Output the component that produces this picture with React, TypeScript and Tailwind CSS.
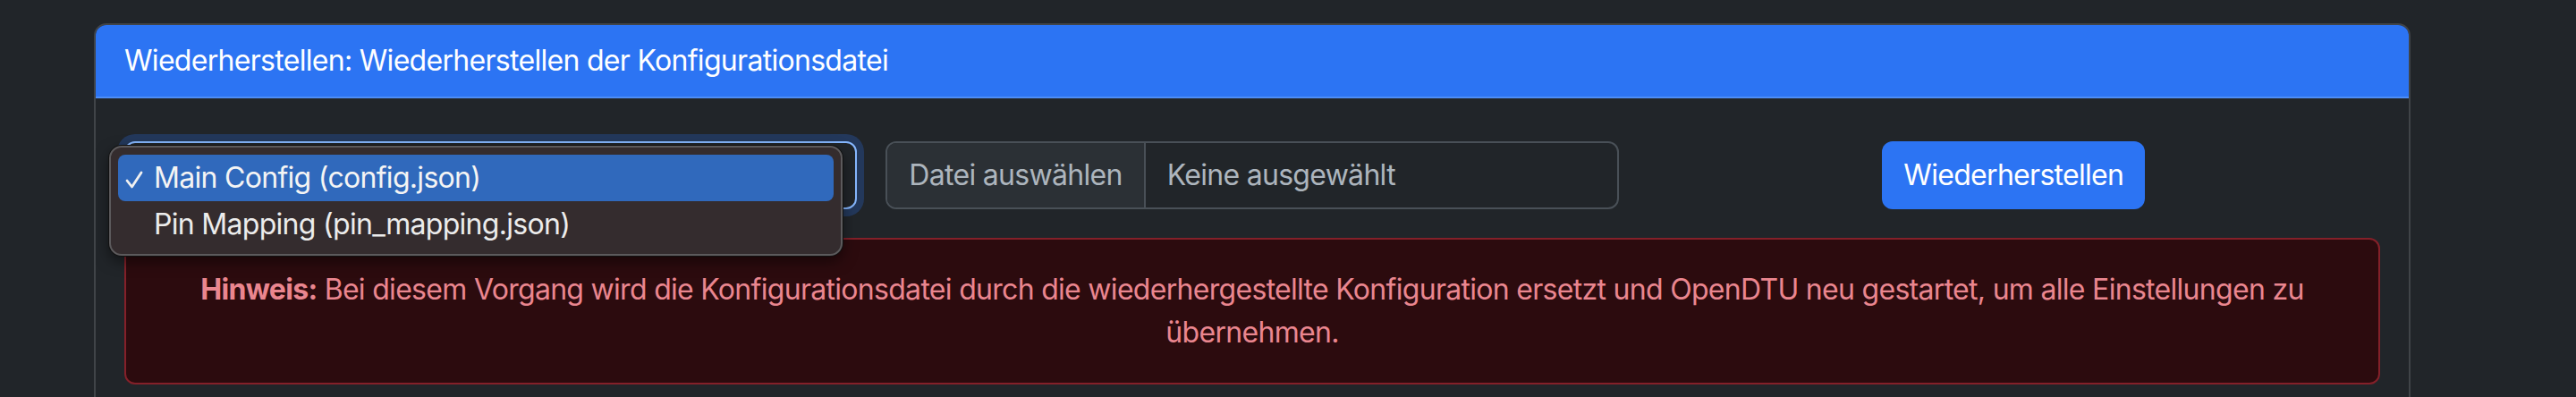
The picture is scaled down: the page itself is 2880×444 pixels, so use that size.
import React from "react";

export default function App() {
  const font = { fontFamily: "Inter, 'Noto Sans', sans-serif" };
  return (
    <div className="w-[2880px] h-[444px] bg-[#212529] overflow-hidden tracking-[-0.7px]" style={font}>
      <div className="pt-[26px] pl-[105px]">
        <div className="w-[2590px] h-[440px] border-2 border-[#404448] rounded-[14px] overflow-hidden bg-[#212529]">
          <div className="bg-[#2c74f3] border-b-2 border-[#4d8df6] px-[32px] py-[16px] text-[32px] leading-[48px] text-white">
            Wiederherstellen: Wiederherstellen der Konfigurationsdatei
          </div>
          <div className="px-[32px] pt-[48px]">
            <div className="grid grid-cols-3 gap-x-[32px]">
              <div className="relative">
                <div className="h-[76px] rounded-[12px] border-2 border-[#86b7fe] bg-[#212529] shadow-[0_0_0_8px_rgba(44,116,243,0.25)]" />
                <div className="absolute left-[-17px] top-[5px] w-[820px] h-[123px] rounded-[14px] border-2 border-[#5c5a5c] bg-[#342c2e] shadow-[0_0_0_1px_#111,0_6px_16px_rgba(0,0,0,0.5)] px-[8px] py-[8px]">
                  <div className="h-[52px] rounded-[8px] bg-[#3069bc] flex items-center text-[32px] text-[#f4f4f4] pl-[8px]">
                    <svg width="20" height="20" viewBox="0 0 20 20" fill="none" className="mt-[4px]">
                      <path d="M2 11 L7.5 18 L18 2" stroke="#f0f0f0" strokeWidth="2.8" strokeLinecap="round" strokeLinejoin="round" />
                    </svg>
                    <span className="ml-[12px]">Main Config (config.json)</span>
                  </div>
                  <div className="h-[52px] flex items-center text-[32px] text-[#ececec] pl-[40px]">
                    Pin Mapping (pin_mapping.json)
                  </div>
                </div>
              </div>
              <div className="h-[76px] rounded-[12px] border-2 border-[#495057] bg-[#212529] flex items-stretch overflow-hidden text-[32px] text-[#adb5bd]">
                <div className="bg-[#2b3035] border-r-2 border-[#495057] px-[24px] flex items-center">Datei auswählen</div>
                <div className="px-[24px] flex items-center">Keine ausgewählt</div>
              </div>
              <div className="flex justify-center">
                <button className="h-[76px] px-[24px] rounded-[12px] bg-[#2c74f3] text-white text-[32px]">Wiederherstellen</button>
              </div>
            </div>
            <div className="mt-[32px] rounded-[12px] border-2 border-[#842029] bg-[#2c0b0e] p-[32px] text-center text-[32px] leading-[48px] text-[#ea868f]">
              <span className="whitespace-nowrap">
                <b className="font-bold">Hinweis:</b> Bei diesem Vorgang wird die Konfigurationsdatei durch die wiederhergestellte Konfiguration ersetzt und OpenDTU neu gestartet, um alle Einstellungen zu
              </span>
              <br />
              übernehmen.
            </div>
          </div>
        </div>
      </div>
    </div>
  );
}
